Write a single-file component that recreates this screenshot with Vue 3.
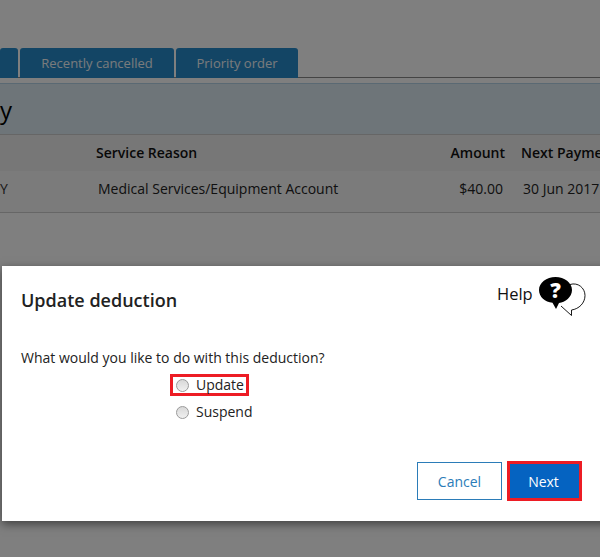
<script setup>
const tabs = [
  { label: '', width: '18px' },
  { label: 'Recently cancelled', width: '154px' },
  { label: 'Priority order', width: '122px' }
]
</script>

<template>
  <div class="page">
    <div class="content">
      <div class="tabs">
        <div v-for="t in tabs" :key="t.width" class="tab" :style="{ width: t.width }">{{ t.label }}</div>
      </div>
      <div class="panel-title">y</div>
      <div class="row head">
        <span class="c-reason">Service Reason</span>
        <span class="c-amount">Amount</span>
        <span class="c-next">Next Payment</span>
      </div>
      <div class="row body">
        <span class="c-code">Y</span>
        <span class="c-reason">Medical Services/Equipment Account</span>
        <span class="c-amount">$40.00</span>
        <span class="c-next">30 Jun 2017</span>
      </div>
    </div>

    <div class="overlay"></div>

    <section class="modal">
      <header class="modal-head">
        <h2>Update deduction</h2>
        <div class="help">
          <span>Help</span>
          <svg width="48" height="40" viewBox="0 0 48 40">
            <path d="M31 7.500 C39 5 46 11 46 18.500 C46 26 40 32 32.500 33 L32.500 38.500 L22 29" fill="#fff" stroke="#000" stroke-width="0.900"/>
            <path d="M16.500 0 C25.500 0 33 5.800 33 13 C33 20 26 25.500 20 26 L17 32 L13.500 25.800 C6 25 0 20 0 13 C0 5.800 7.500 0 16.500 0 Z" fill="#000"/>
            <text x="16.500" y="21" text-anchor="middle" class="qmark">?</text>
          </svg>
        </div>
      </header>
      <p class="question">What would you like to do with this deduction?</p>
      <div class="options">
        <label class="option marked"><span class="radio"></span>Update</label>
        <label class="option"><span class="radio"></span>Suspend</label>
      </div>
      <footer class="actions">
        <button class="btn cancel">Cancel</button>
        <button class="btn next">Next</button>
      </footer>
    </section>
  </div>
</template>

<style>
html, body { margin: 0; background: #7f7f7f; }
</style>

<style scoped>
.page {
  position: relative;
  width: 600px;
  height: 557px;
  overflow: hidden;
  background: #fff;
  font-family: "Open Sans", "Liberation Sans", sans-serif;
  color: #222;
}
.content {
  width: 600px;
  padding-top: 48px;
  box-sizing: border-box;
}
.tabs {
  display: flex;
  gap: 2px;
  height: 29px;
  border-bottom: 1px solid #888;
  box-sizing: content-box;
}
.tab {
  height: 30px;
  box-sizing: border-box;
  background: #268bca;
  border-radius: 3px 3px 0 0;
  color: #f2f6f9;
  font-size: 13px;
  line-height: 30px;
  text-align: center;
}
.panel-title {
  margin-top: 5px;
  height: 52px;
  box-sizing: border-box;
  border-top: 1px solid #b5d3e6;
  border-bottom: 1px solid #ccc;
  background: #dcebf2;
  font-size: 24px;
  line-height: 52px;
  color: #000;
}
.row {
  display: flex;
  font-size: 14px;
  box-sizing: border-box;
  overflow: hidden;
}
.head {
  height: 36px;
  line-height: 36px;
  font-weight: 600;
  color: #111;
  background: #eee;
}
.body {
  height: 42px;
  line-height: 36px;
  background: #f6f6f6;
  border-bottom: 1px solid #ccc;
}
.head .c-reason { margin-left: 96px; width: 339px; flex: none; }
.head .c-amount { width: 70px; text-align: right; flex: none; }
.head .c-next { margin-left: 16px; white-space: nowrap; flex: none; }
.c-code { width: 8px; color: #333; flex: none; }
.body .c-reason { margin-left: 90px; width: 340px; flex: none; }
.body .c-amount { width: 65px; text-align: right; flex: none; }
.body .c-next { margin-left: 20px; white-space: nowrap; flex: none; }

.overlay {
  position: absolute;
  inset: 0;
  background: rgba(0, 0, 0, 0.5);
}
.modal {
  position: absolute;
  left: 2px;
  top: 266px;
  width: 640px;
  height: 255px;
  box-sizing: border-box;
  background: #fff;
  box-shadow: 0 3px 9px rgba(0, 0, 0, 0.5);
  padding: 0 0 0 19px;
}
.modal-head {
  display: flex;
  width: 579px;
  height: 82px;
  position: relative;
}
.modal-head h2 {
  margin: 22px 0 0;
  font-size: 18px;
  line-height: 24px;
  font-weight: 600;
  color: #222;
}
.help {
  position: absolute;
  left: 476px;
  top: 11px;
  display: flex;
  align-items: flex-start;
  font-size: 16.5px;
  font-weight: 500;
  color: #111;
}
.help span { margin-top: 5px; width: 37px; margin-right: 5px; }
.qmark {
  font-family: "Open Sans", sans-serif;
  font-size: 21px;
  font-weight: 800;
  fill: #fff;
}
.question {
  margin: 0;
  font-size: 14px;
  line-height: 19px;
  color: #222;
}
.options {
  margin: 7px 0 0 149px;
  display: flex;
  flex-direction: column;
  align-items: flex-start;
  gap: 5px;
}
.option {
  display: flex;
  align-items: center;
  height: 22px;
  box-sizing: border-box;
  padding: 0 2px 0 3px;
  font-size: 14px;
  line-height: 16px;
  color: #222;
  border: 3px solid transparent;
  gap: 7px;
}
.option.marked { border-color: #ed1c24; }
.radio {
  width: 13px;
  height: 13px;
  box-sizing: border-box;
  border-radius: 50%;
  border: 1px solid #9a9a9a;
  background: linear-gradient(#d8d8d8, #f0f0f0);
}
.actions {
  position: absolute;
  left: 415px;
  top: 195px;
  display: flex;
  align-items: center;
  gap: 5px;
}
.btn {
  font-family: inherit;
  font-size: 14px;
  box-sizing: border-box;
  padding: 0;
}
.cancel {
  width: 85px;
  height: 38px;
  background: #fff;
  border: 1px solid #2b7cb8;
  color: #2b7cb8;
}
.next {
  width: 75px;
  height: 40px;
  padding-right: 2px;
  background: #0563c1;
  border: 3px solid #ed1c24;
  color: #fff;
  font-weight: 500;
}
</style>
